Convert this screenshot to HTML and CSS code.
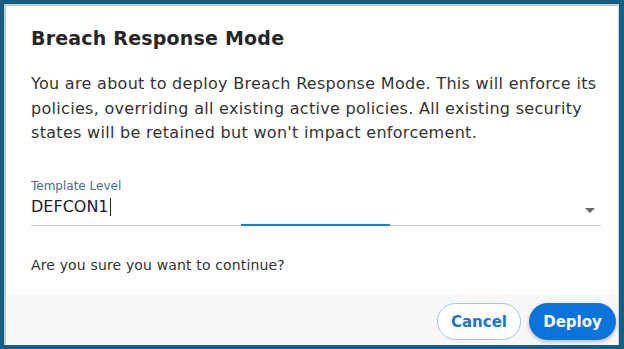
FILE: index.html
```html
<!DOCTYPE html>
<html>
<head>
<meta charset="utf-8">
<link rel="stylesheet" href="styles.css">
</head>
<body>
<div class="dialog">
  <div class="content">
    <h1 class="title">Breach Response Mode</h1>
    <p class="message">You are about to deploy Breach Response Mode. This will enforce its policies, overriding all existing active policies. All existing security states will be retained but won't impact enforcement.</p>
    <div class="field">
      <label class="label">Template Level</label>
      <div class="select">
        <span class="value">DEFCON1<span class="caret"></span></span>
        <svg class="arrow" width="10" height="5" viewBox="0 0 10 5"><path d="M0 0h10L5 5z" fill="#6b6b6b"/></svg>
        <span class="focus-bar"></span>
      </div>
    </div>
    <p class="confirm">Are you sure you want to continue?</p>
  </div>
  <div class="footer">
    <button class="btn btn-outline">Cancel</button>
    <button class="btn btn-primary">Deploy</button>
  </div>
</div>
</body>
</html>
```

FILE: styles.css
```css
html, body {
  margin: 0;
  padding: 0;
}
body {
  background: #175e85;
  width: 624px;
  height: 349px;
  padding: 4px 5px 4px 4px;
  box-sizing: border-box;
  font-family: "DejaVu Sans", "Liberation Sans", sans-serif;
}
.dialog {
  background: #ffffff;
  height: 341px;
  box-sizing: border-box;
  border-left: 2px solid #c8c8c8;
  border-top: 2px solid #c8c8c8;
  border-right: 1px solid #d0d0d0;
  display: flex;
  flex-direction: column;
}
.content {
  flex: 1;
  padding: 0 14px 0 25px;
}
.title {
  margin: 19px 0 0 0;
  font-size: 19px;
  line-height: 26px;
  font-weight: 700;
  letter-spacing: 0.2px;
  color: #262626;
}
.message {
  margin: 21px 0 0 0;
  font-size: 16px;
  line-height: 24.5px;
  letter-spacing: 0.3px;
  color: #333333;
  max-width: 575px;
}
.field {
  margin-top: 32px;
}
.label {
  display: block;
  font-size: 12px;
  line-height: 16px;
  color: #52698a;
}
.select {
  position: relative;
  height: 31px;
  border-bottom: 1px solid #cfcfcf;
  display: flex;
  align-items: center;
  margin-right: 3px;
}
.value {
  font-size: 16px;
  color: #222;
  display: flex;
  align-items: center;
  margin-top: -5px;
}
.caret {
  display: inline-block;
  width: 1px;
  height: 18px;
  background: #222;
  margin-left: 1px;
}
.arrow {
  position: absolute;
  right: 6px;
  top: 14px;
}
.focus-bar {
  position: absolute;
  left: 210px;
  width: 149px;
  bottom: -1px;
  height: 2px;
  background: #1a7ce0;
}
.confirm {
  margin: 30px 0 0 0;
  font-size: 14px;
  line-height: 18px;
  letter-spacing: 0.15px;
  color: #333333;
}
.footer {
  background: #f8f8f8;
  height: 50px;
  box-sizing: border-box;
  padding: 3px 2px 0 0;
  display: flex;
  justify-content: flex-end;
  align-items: center;
  gap: 8px;
}
.btn {
  font-family: inherit;
  font-size: 15px;
  font-weight: 700;
  height: 37px;
  border-radius: 19px;
  cursor: pointer;
}
.btn-outline {
  width: 84px;
  background: #ffffff;
  border: 1px solid #9cc7f2;
  color: #1a73d6;
}
.btn-primary {
  width: 87px;
  background: #0a74da;
  border: none;
  color: #ffffff;
  box-shadow: 0 2px 4px rgba(0,0,0,0.25);
}
```
